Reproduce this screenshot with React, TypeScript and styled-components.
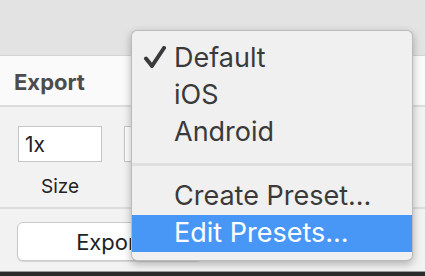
import React from "react";
import styled, { createGlobalStyle } from "styled-components";

const Global = createGlobalStyle`
  html, body { margin: 0; padding: 0; }
  body {
    width: 425px;
    height: 276px;
    overflow: hidden;
    background: #e4e4e4;
    font-family: Inter, "Open Sans", sans-serif;
  }
`;

const Page = styled.div`
  position: relative;
  width: 425px;
  height: 276px;
  display: flex;
  flex-direction: column;
  background: #e4e4e4;
  overflow: hidden;
`;

const TopBar = styled.div`
  height: 55px;
  flex: none;
  background: #e3e3e3;
  border-bottom: 1px solid #d4d4d4;
`;

const Panel = styled.div`
  flex: 1;
  display: flex;
  flex-direction: column;
  background: #f2f2f2;
`;

const Header = styled.div`
  height: 51px;
  flex: none;
  display: flex;
  align-items: center;
  padding-left: 14px;
  background: #fafafa;
  border-bottom: 2px solid #dcdcdc;
  box-sizing: border-box;
`;

const Title = styled.div`
  font-size: 22px;
  font-weight: 700;
  color: #4c4c4c;
  padding-top: 2px;
`;

const Body = styled.div`
  height: 102px;
  flex: none;
  display: flex;
  gap: 22px;
  padding: 19px 0 0 18px;
  box-sizing: border-box;
  border-bottom: 2px solid #dcdcdc;
`;

const Field = styled.div`
  display: flex;
  flex-direction: column;
  align-items: center;
  gap: 13px;
`;

const Input = styled.div`
  width: 84px;
  height: 36px;
  box-sizing: border-box;
  background: #ffffff;
  border: 1px solid #c6c6c6;
  display: flex;
  align-items: center;
  padding-left: 6px;
  font-size: 21px;
  color: #222;
`;

const Label = styled.div`
  font-size: 19px;
  color: #222;
`;

const Footer = styled.div`
  flex: 1;
  display: flex;
  align-items: flex-start;
  padding: 13px 0 0 17px;
  box-sizing: border-box;
`;

const Button = styled.div`
  width: 186px;
  height: 39px;
  box-sizing: border-box;
  background: #ffffff;
  border: 1px solid #c9c9c9;
  border-radius: 6px;
  box-shadow: 0 1px 1px rgba(0, 0, 0, 0.12);
  display: flex;
  align-items: center;
  justify-content: center;
  font-size: 22px;
  color: #222;
`;

const BottomStrip = styled.div`
  height: 4px;
  flex: none;
  background: #2b2b2b;
  border-top: 1px solid #9a9a9a;
`;

const Menu = styled.div`
  position: absolute;
  left: 131px;
  top: 30px;
  width: 282px;
  box-sizing: border-box;
  padding: 9px 0 8px;
  background: #f0f0f0;
  border: 1px solid rgba(0, 0, 0, 0.22);
  border-radius: 6px;
  box-shadow: 0 3px 8px rgba(0, 0, 0, 0.28);
  overflow: hidden;
  display: flex;
  flex-direction: column;
`;

const Item = styled.div<{ $active?: boolean }>`
  height: 37px;
  display: flex;
  align-items: center;
  padding-left: 42px;
  padding-bottom: 3px;
  box-sizing: border-box;
  position: relative;
  font-size: 27px;
  color: ${(p) => (p.$active ? "#ffffff" : "#3a3a3a")};
  background: ${(p) => (p.$active ? "#4897f7" : "transparent")};
`;

const Check = styled.svg`
  position: absolute;
  left: 11px;
  top: 6px;
`;

const Separator = styled.div`
  height: 27px;
  display: flex;
  align-items: center;
  &::after {
    content: "";
    flex: 1;
    height: 3px;
    background: #dedede;
  }
`;

export default function App() {
  return (
    <>
      <Global />
      <Page>
        <TopBar />
        <Panel>
          <Header>
            <Title>Export</Title>
          </Header>
          <Body>
            <Field>
              <Input>1x</Input>
              <Label>Size</Label>
            </Field>
            <Field>
              <Input />
            </Field>
          </Body>
          <Footer>
            <Button>Export</Button>
          </Footer>
          <BottomStrip />
        </Panel>
        <Menu>
          <Item>
            <Check width="23" height="23" viewBox="0 0 23 23">
              <path
                d="M3 12.5 L9 20 L21 2"
                fill="none"
                stroke="#3a3a3a"
                strokeWidth="4"
                strokeLinecap="round"
                strokeLinejoin="round"
              />
            </Check>
            Default
          </Item>
          <Item>iOS</Item>
          <Item>Android</Item>
          <Separator />
          <Item>Create Preset...</Item>
          <Item $active>Edit Presets...</Item>
        </Menu>
      </Page>
    </>
  );
}
